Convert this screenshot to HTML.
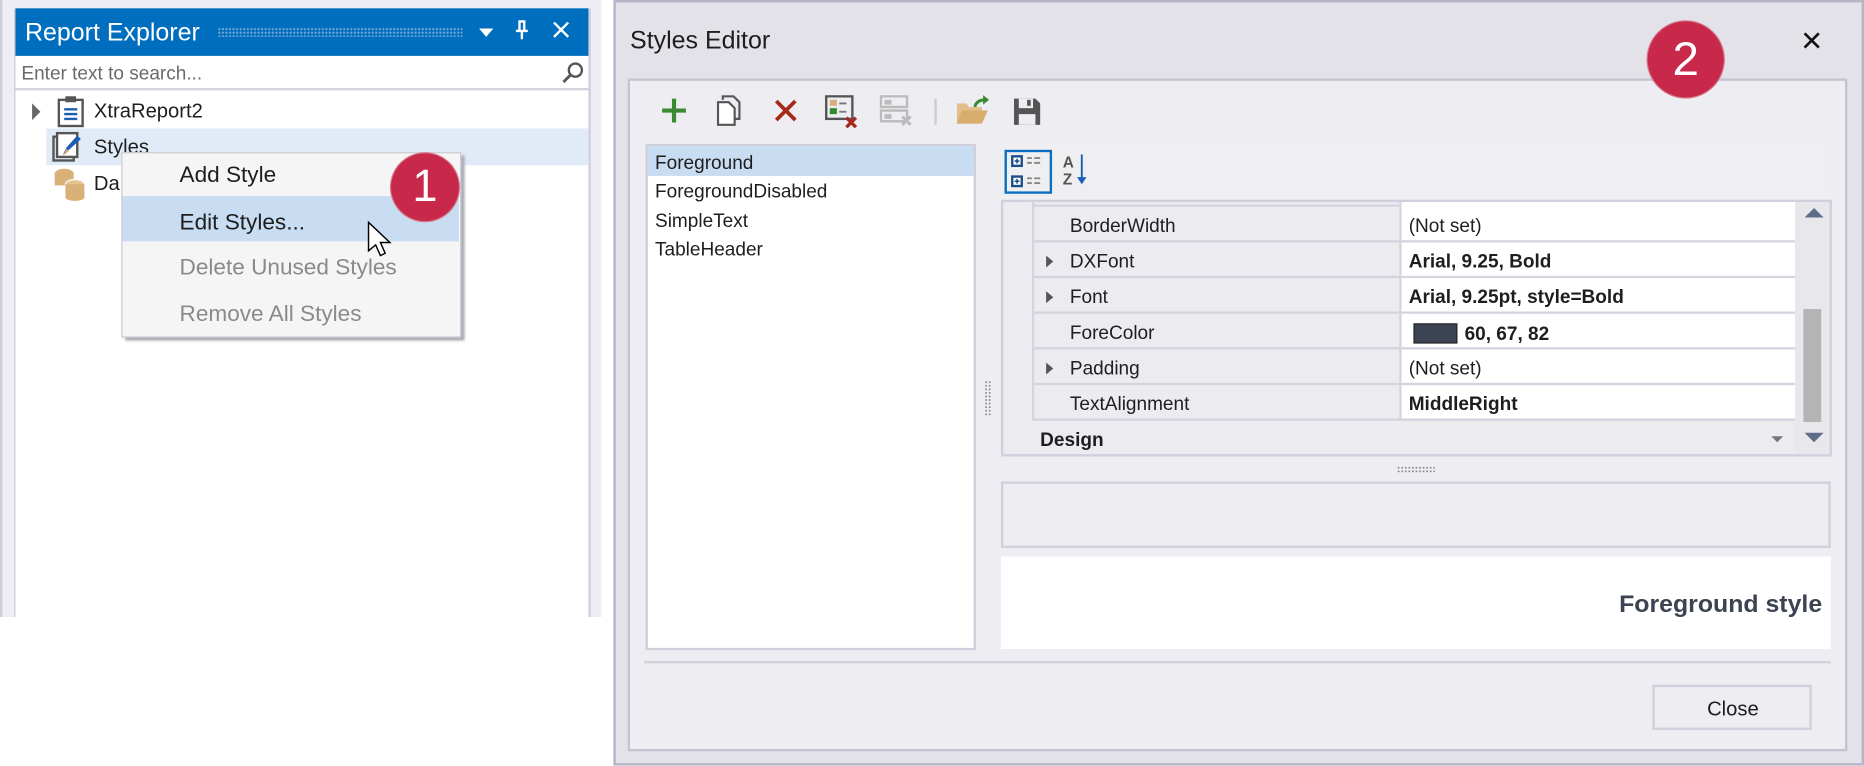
<!DOCTYPE html>
<html><head><meta charset="utf-8"><style>
*{margin:0;padding:0;box-sizing:border-box}
html,body{width:1864px;height:766px;overflow:hidden;background:#fff}
#s{position:absolute;left:0;top:0;width:1568px;height:644px;transform:scale(1.18878);transform-origin:0 0;font-family:"Liberation Sans",sans-serif;color:#1e1e1e}
.a{position:absolute}
.t{position:absolute;white-space:nowrap;margin-top:2px}
.badge{position:absolute;border-radius:50%;background:#c8294a;color:#fff;font-size:38px;text-align:center;box-shadow:0 0 0 1px #d97a8c}
.row{position:absolute;left:870px;width:640px;height:30px;border-bottom:2px solid #d4d4de;font-size:16px}
.row .n{position:absolute;left:30px;top:8px}
.row .v{position:absolute;left:307px;top:0;height:28px;width:333px;background:#fff;border-left:2px solid #d4d4de;padding:8px 0 0 6px}
.row .arr{position:absolute;left:10px;top:11px;width:0;height:0;border-left:6px solid #555;border-top:5px solid transparent;border-bottom:5px solid transparent}
b{font-weight:bold}
</style></head><body><div id="s">
<div class="a" style="left:0;top:0;width:506px;height:519px;background:#eeedf3;border-left:2px solid #cfcfdc"></div>
<div class="a" style="left:12px;top:7px;width:485px;height:512px;background:#fff;border-left:1px solid #c8c8d4;border-right:2px solid #cfcfdc"></div>
<div class="a" style="left:13px;top:7px;width:482px;height:40px;background:#006ebe"></div>
<div class="t" style="left:21px;top:14px;font-size:21px;color:#fff">Report Explorer</div>
<div class="a" style="left:183px;top:23px;width:206px;height:8px;background-image:radial-gradient(circle,#6ea4d6 0.9px,transparent 1.1px);background-size:3px 3px"></div>
<div class="a" style="left:403px;top:24px;width:0;height:0;border-left:6px solid transparent;border-right:6px solid transparent;border-top:7px solid #fff"></div>
<svg class="a" style="left:432px;top:16px" width="14" height="18"><path d="M4 2h6M5 2v8M9 2v8M2 10h10M7 10v7" stroke="#fff" stroke-width="2" fill="none"/></svg>
<svg class="a" style="left:464px;top:17px" width="16" height="16"><path d="M2 2L14 14M14 2L2 14" stroke="#fff" stroke-width="2"/></svg>
<div class="a" style="left:13px;top:47px;width:482px;height:29px;border-bottom:2px solid #d4d4de"></div>
<div class="t" style="left:18px;top:52px;font-size:16px;color:#6a6a6a">Enter text to search...</div>
<svg class="a" style="left:472px;top:51px" width="20" height="20"><circle cx="12" cy="8" r="5.5" stroke="#555" stroke-width="2" fill="none"/><path d="M8 12L2 18" stroke="#555" stroke-width="2.4"/></svg>
<div class="a" style="left:27px;top:87px;width:0;height:0;border-left:7px solid #666;border-top:7px solid transparent;border-bottom:7px solid transparent"></div>
<svg class="a" style="left:48px;top:80px" width="24" height="28"><rect x="1.5" y="4" width="20" height="22" fill="#fff" stroke="#555" stroke-width="2"/><rect x="7" y="1" width="9" height="5" fill="#555"/><path d="M6 12h11M6 16h11M6 20h11" stroke="#1a5fb4" stroke-width="2"/></svg>
<div class="t" style="left:79px;top:82px;font-size:17px">XtraReport2</div>
<div class="a" style="left:39px;top:108px;width:456px;height:31px;background:#e1ebf7"></div>
<svg class="a" style="left:43px;top:110px" width="30" height="30"><rect x="2" y="5" width="17" height="20" fill="none" stroke="#555" stroke-width="2"/><rect x="5" y="2" width="17" height="20" fill="#fff" stroke="#555" stroke-width="2"/><path d="M10 20l3-6 9-10 3 3-10 9z" fill="#1a5fb4"/><path d="M10 21l3-6 2 2z" fill="#d9a868"/></svg>
<div class="t" style="left:79px;top:112px;font-size:17px">Styles</div>
<svg class="a" style="left:44px;top:140px" width="30" height="30"><ellipse cx="10" cy="6" rx="8" ry="4" fill="#d9b077"/><rect x="2" y="6" width="16" height="10" fill="#d9b077"/><ellipse cx="19" cy="15" rx="8" ry="4" fill="#e6c48f" stroke="#fff"/><rect x="11" y="15" width="16" height="11" fill="#d9b077"/><ellipse cx="19" cy="26" rx="8" ry="3" fill="#d9b077"/></svg>
<div class="t" style="left:79px;top:143px;font-size:17px">Da</div>
<div class="a" style="left:102px;top:128px;width:286px;height:156px;background:#f5f5f5;border:1px solid #c9c9d2;box-shadow:3px 3px 2px #a9a9b5"></div>
<div class="t" style="left:151px;top:135px;font-size:19px">Add Style</div>
<div class="a" style="left:103px;top:165px;width:283px;height:38px;background:#c8dcf2"></div>
<div class="t" style="left:151px;top:175px;font-size:19px">Edit Styles...</div>
<div class="t" style="left:151px;top:213px;font-size:19px;color:#8a8a8a">Delete Unused Styles</div>
<div class="t" style="left:151px;top:252px;font-size:19px;color:#8a8a8a">Remove All Styles</div>
<svg class="a" style="left:308px;top:185px" width="26" height="36"><path d="M2 2v24l6-5 4 9 4-2-4-9h8z" fill="#fff" stroke="#000" stroke-width="1.2"/></svg>
<div class="badge" style="left:329px;top:129px;width:57px;height:57px;line-height:57px">1</div>
<div class="a" style="left:516px;top:0;width:1052px;height:644px;background:#e3e2e9;border:2px solid #b4b4c6"></div>
<div class="t" style="left:530px;top:21px;font-size:21px">Styles Editor</div>
<svg class="a" style="left:1516px;top:26px" width="16" height="16"><path d="M2 2L14 14M14 2L2 14" stroke="#111" stroke-width="2.2"/></svg>
<div class="a" style="left:528px;top:66px;width:1026px;height:566px;background:#ededf2;border:2px solid #c3c3d2"></div>
<div class="badge" style="left:1386px;top:18px;width:64px;height:64px;line-height:64px;font-size:40px">2</div>
<svg class="a" style="left:555px;top:81px" width="24" height="24"><path d="M12 2v20M2 12h20" stroke="#3a8a34" stroke-width="3.5"/></svg>
<svg class="a" style="left:602px;top:80px" width="24" height="26"><path d="M6 4V1h9l5 5v14h-4" fill="none" stroke="#555" stroke-width="1.8"/><path d="M2 6h9l5 5v14H2z" fill="#fff" stroke="#555" stroke-width="1.8"/></svg>
<svg class="a" style="left:650px;top:82px" width="22" height="22"><path d="M3 3L19 19M19 3L3 19" stroke="#a8281a" stroke-width="3.2"/></svg>
<svg class="a" style="left:694px;top:80px" width="30" height="28"><rect x="1" y="1" width="22" height="19" fill="none" stroke="#555" stroke-width="2"/><rect x="4" y="4" width="6" height="5" fill="#d9b077"/><rect x="4" y="11" width="6" height="5" fill="#2e8b2e"/><path d="M12 7h6M12 14h6" stroke="#777" stroke-width="1.5"/><path d="M18 19l8 8M26 19l-8 8" stroke="#a8281a" stroke-width="2.8"/></svg>
<svg class="a" style="left:740px;top:80px" width="30" height="28"><rect x="1" y="1" width="22" height="9" fill="none" stroke="#bbb" stroke-width="2"/><rect x="1" y="13" width="22" height="9" fill="none" stroke="#bbb" stroke-width="2"/><rect x="4" y="4" width="6" height="4" fill="#bbb"/><rect x="4" y="16" width="6" height="4" fill="#bbb"/><path d="M19 18l7 7M26 18l-7 7" stroke="#bbb" stroke-width="2.5"/></svg>
<div class="a" style="left:786px;top:83px;width:2px;height:22px;background:#ccc"></div>
<svg class="a" style="left:804px;top:80px" width="30" height="26"><path d="M1 7h8l2 3h11v14H1z" fill="#e1bf8a"/><path d="M5 13h22l-5 11H1z" fill="#d9ad6d"/><path d="M16 10c1-5 5-6 9-6" stroke="#3a8a34" stroke-width="2.5" fill="none"/><path d="M23 0l5 4-5 4z" fill="#3a8a34"/></svg>
<svg class="a" style="left:852px;top:82px" width="24" height="24"><path d="M1 1h18l4 4v18H1z" fill="#555"/><rect x="5" y="1" width="12" height="8" fill="#ededf2"/><rect x="12" y="2" width="3" height="5" fill="#555"/><rect x="5" y="14" width="14" height="9" fill="#ededf2"/></svg>
<div class="a" style="left:543px;top:121px;width:278px;height:426px;background:#fff;border:2px solid #cfcfdc"></div>
<div class="a" style="left:545px;top:123px;width:274px;height:25px;background:#c8dcf2"></div>
<div class="t" style="left:551px;top:127px;font-size:16px">Foreground</div>
<div class="t" style="left:551px;top:151px;font-size:16px">ForegroundDisabled</div>
<div class="t" style="left:551px;top:176px;font-size:16px">SimpleText</div>
<div class="t" style="left:551px;top:200px;font-size:16px">TableHeader</div>
<div class="a" style="left:828px;top:320px;width:6px;height:30px;background-image:radial-gradient(circle,#888 0.7px,transparent 0.9px);background-size:3px 3px"></div>
<div class="a" style="left:842px;top:120px;width:698px;height:48px;background:#efeff1"></div>
<div class="a" style="left:845px;top:126px;width:40px;height:37px;border:2px solid #0a6fc2"></div>
<svg class="a" style="left:850px;top:130px" width="30" height="30"><rect x="1.5" y="1.5" width="8" height="8" fill="#fff" stroke="#1a4f8a" stroke-width="2"/><rect x="1.5" y="18.5" width="8" height="8" fill="#fff" stroke="#1a4f8a" stroke-width="2"/><path d="M5.5 3.5v4M3.5 5.5h4M5.5 20.5v4M3.5 22.5h4" stroke="#1a4f8a" stroke-width="1.3"/><path d="M14 3h4M20 3h5M14 7h4M20 7h5M14 20h4M20 20h5M14 24h4M20 24h5" stroke="#888" stroke-width="1.6"/></svg>
<div class="t" style="left:894px;top:128px;font-size:13px;font-weight:bold;color:#555;line-height:14px">A<br>Z</div>
<svg class="a" style="left:905px;top:128px" width="12" height="30"><path d="M5 2v22" stroke="#1a5fb4" stroke-width="1.6"/><path d="M1 21l4 6 4-6z" fill="#1a5fb4"/></svg>
<div class="a" style="left:842px;top:168px;width:699px;height:216px;background:#ebebf0;border:2px solid #cfd0dc"></div>
<div class="a" style="left:869px;top:170px;width:641px;height:4px;border-bottom:2px solid #d4d4de"></div>
<div class="a" style="left:1177px;top:170px;width:333px;height:4px;background:#fff;border-left:2px solid #d4d4de"></div>
<div class="a" style="left:868px;top:170px;width:2px;height:184px;background:#d4d4de"></div>
<div class="row" style="top:174px"><span class="n">BorderWidth</span><div class="v">(Not set)</div></div>
<div class="row" style="top:204px"><span class="arr"></span><span class="n">DXFont</span><div class="v"><b>Arial, 9.25, Bold</b></div></div>
<div class="row" style="top:234px"><span class="arr"></span><span class="n">Font</span><div class="v"><b>Arial, 9.25pt, style=Bold</b></div></div>
<div class="row" style="top:264px"><span class="n">ForeColor</span><div class="v"><span style="display:inline-block;width:37px;height:17px;background:#3c4352;border:1px solid #222;vertical-align:-3px;margin:0 6px 0 4px"></span><b>60, 67, 82</b></div></div>
<div class="row" style="top:294px"><span class="arr"></span><span class="n">Padding</span><div class="v">(Not set)</div></div>
<div class="row" style="top:324px"><span class="n">TextAlignment</span><div class="v"><b>MiddleRight</b></div></div>
<div class="t" style="left:875px;top:360px;font-size:16px;font-weight:bold">Design</div>
<div class="a" style="left:1490px;top:367px;width:0;height:0;border-left:5px solid transparent;border-right:5px solid transparent;border-top:5px solid #777"></div>
<div class="a" style="left:1510px;top:170px;width:29px;height:212px;background:#e8e8ec"></div>
<div class="a" style="left:1518px;top:175px;width:0;height:0;border-left:8px solid transparent;border-right:8px solid transparent;border-bottom:8px solid #5e6e8a"></div>
<div class="a" style="left:1517px;top:260px;width:15px;height:95px;background:#b4b4b4"></div>
<div class="a" style="left:1518px;top:364px;width:0;height:0;border-left:8px solid transparent;border-right:8px solid transparent;border-top:8px solid #5e6e8a"></div>
<div class="a" style="left:1175px;top:392px;width:32px;height:6px;background-image:radial-gradient(circle,#888 0.7px,transparent 0.9px);background-size:3px 3px"></div>
<div class="a" style="left:842px;top:405px;width:698px;height:56px;border:2px solid #cfd0dc"></div>
<div class="a" style="left:842px;top:468px;width:698px;height:78px;background:#fff"></div>
<div class="t" style="left:1362px;top:495px;font-size:20.5px;font-weight:bold;color:#3c4352;transform:scaleX(1.02);transform-origin:0 0">Foreground style</div>
<div class="a" style="left:542px;top:556px;width:998px;height:2px;background:#d2d2dc"></div>
<div class="a" style="left:1390px;top:576px;width:134px;height:38px;border:2px solid #cfd0dc;background:#ededf2"></div>
<div class="t" style="left:1436px;top:585px;font-size:17px">Close</div>
</div></body></html>
